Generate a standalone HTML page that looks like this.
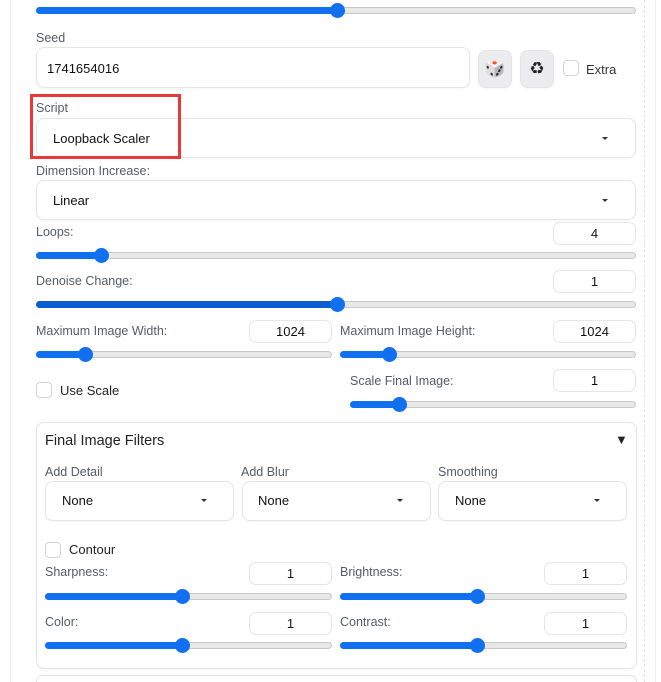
<!DOCTYPE html>
<html style="width:661px;height:682px;overflow:hidden"><head><style>
*{box-sizing:border-box;margin:0;padding:0}
body{width:661px;height:682px;background:#fff;font-family:"Liberation Sans",sans-serif;position:relative;overflow:hidden}
.a{position:absolute}
.lbl{position:absolute;font-size:12.5px;color:#555c66;line-height:14px;margin-top:2px}
.box{position:absolute;border:1px solid #e3e5e8;border-radius:8px;background:#fff;box-shadow:0 1px 2px rgba(0,0,0,.04)}
.num{position:absolute;border:1px solid #e3e5e8;border-radius:7px;background:#fff;font-size:13px;color:#111;text-align:center;line-height:21px;height:23px}
.tr{position:absolute;height:7px;border:1px solid #c9c9c9;border-radius:4px;background:#e8e8e8}
.fill{position:absolute;left:-1px;top:-1px;height:7px;border-radius:4px;background:#1170f0}
.th{position:absolute;top:-5px;width:15px;height:15px;border-radius:50%;background:#1170f0;margin-left:-7px}
.txt{position:absolute;font-size:13px;color:#111}
.arr{position:absolute;width:0;height:0;border-left:3.5px solid transparent;border-right:3.5px solid transparent;border-top:3.5px solid #333}
.cb{position:absolute;width:16px;height:16px;border:1px solid #cfd2d6;border-radius:4px;background:#fff}
</style></head><body>
<div class="a" style="left:10px;top:0;width:1px;height:682px;background:#ececec"></div>
<div class="a" style="left:644px;top:0;width:0;height:682px;border-left:1px dashed #e2e2e2"></div>
<div class="a" style="left:655px;top:0;width:1px;height:682px;background:#efefef"></div>

<div class="tr" style="left:36px;top:7px;width:600px"><div class="fill" style="width:301px"></div><div class="th" style="left:300px"></div></div>

<div class="lbl" style="left:36px;top:29px">Seed</div>
<div class="box" style="left:36px;top:47px;width:434px;height:41px"></div>
<div class="txt" style="left:47px;top:61px">1741654016</div>
<div class="box" style="left:478px;top:50px;width:34px;height:38px;background:#ececee;border-color:#e4e4e6;display:flex;align-items:center;justify-content:center;font-size:17px">🎲</div>
<div class="box" style="left:520px;top:50px;width:34px;height:38px;background:#ececee;border-color:#e4e4e6;display:flex;align-items:center;justify-content:center;font-size:17px;color:#222">♻</div>
<div class="cb" style="left:563px;top:60px"></div>
<div class="txt" style="left:586px;top:62px;color:#333">Extra</div>

<div class="lbl" style="left:36px;top:99px">Script</div>
<div class="box" style="left:36px;top:118px;width:600px;height:40px"></div>
<div class="txt" style="left:53px;top:131px">Loopback Scaler</div>
<div class="arr" style="left:602px;top:137px"></div>
<div class="a" style="left:30px;top:94px;width:151px;height:65px;border:3px solid #e8383a"></div>

<div class="lbl" style="left:36px;top:162px">Dimension Increase:</div>
<div class="box" style="left:36px;top:180px;width:600px;height:40px"></div>
<div class="txt" style="left:53px;top:193px">Linear</div>
<div class="arr" style="left:602px;top:199px"></div>

<div class="lbl" style="left:36px;top:223px">Loops:</div>
<div class="num" style="left:553px;top:222px;width:83px">4</div>
<div class="tr" style="left:36px;top:252px;width:600px"><div class="fill" style="width:65px"></div><div class="th" style="left:64px"></div></div>

<div class="lbl" style="left:36px;top:272px">Denoise Change:</div>
<div class="num" style="left:553px;top:270px;width:83px">1</div>
<div class="tr" style="left:36px;top:301px;width:600px"><div class="fill" style="width:301px;background:#0a5fd0"></div><div class="th" style="left:300px"></div></div>

<div class="lbl" style="left:36px;top:322px">Maximum Image Width:</div>
<div class="num" style="left:249px;top:320px;width:83px">1024</div>
<div class="tr" style="left:36px;top:351px;width:296px"><div class="fill" style="width:49px"></div><div class="th" style="left:48px"></div></div>
<div class="lbl" style="left:340px;top:322px">Maximum Image Height:</div>
<div class="num" style="left:553px;top:320px;width:83px">1024</div>
<div class="tr" style="left:340px;top:351px;width:296px"><div class="fill" style="width:49px"></div><div class="th" style="left:48px"></div></div>

<div class="cb" style="left:36px;top:382px"></div>
<div class="txt" style="left:60px;top:383px;color:#222">Use Scale</div>
<div class="lbl" style="left:350px;top:372px">Scale Final Image:</div>
<div class="num" style="left:553px;top:369px;width:83px">1</div>
<div class="tr" style="left:350px;top:401px;width:286px"><div class="fill" style="width:49px"></div><div class="th" style="left:48px"></div></div>

<div class="box" style="left:36px;top:422px;width:601px;height:247px"></div>
<div class="a" style="left:45px;top:433px;font-size:14.5px;color:#222">Final Image Filters</div>
<div class="a" style="left:615px;top:432px;font-size:13px;color:#222">▼</div>

<div class="lbl" style="left:45px;top:463px">Add Detail</div>
<div class="lbl" style="left:241px;top:463px">Add Blur</div>
<div class="lbl" style="left:438px;top:463px">Smoothing</div>
<div class="box" style="left:45px;top:481px;width:189px;height:40px"></div>
<div class="box" style="left:242px;top:481px;width:189px;height:40px"></div>
<div class="box" style="left:438px;top:481px;width:189px;height:40px"></div>
<div class="txt" style="left:62px;top:493px">None</div>
<div class="txt" style="left:258px;top:493px">None</div>
<div class="txt" style="left:455px;top:493px">None</div>
<div class="arr" style="left:201px;top:499px"></div>
<div class="arr" style="left:397px;top:499px"></div>
<div class="arr" style="left:594px;top:499px"></div>

<div class="cb" style="left:45px;top:542px"></div>
<div class="txt" style="left:69px;top:542px;color:#222">Contour</div>

<div class="lbl" style="left:45px;top:563px">Sharpness:</div>
<div class="num" style="left:249px;top:562px;width:83px">1</div>
<div class="tr" style="left:45px;top:593px;width:287px"><div class="fill" style="width:137px"></div><div class="th" style="left:136px"></div></div>
<div class="lbl" style="left:340px;top:563px">Brightness:</div>
<div class="num" style="left:544px;top:562px;width:83px">1</div>
<div class="tr" style="left:340px;top:593px;width:287px"><div class="fill" style="width:137px"></div><div class="th" style="left:136px"></div></div>

<div class="lbl" style="left:45px;top:613px">Color:</div>
<div class="num" style="left:249px;top:612px;width:83px">1</div>
<div class="tr" style="left:45px;top:642px;width:287px"><div class="fill" style="width:137px"></div><div class="th" style="left:136px"></div></div>
<div class="lbl" style="left:340px;top:613px">Contrast:</div>
<div class="num" style="left:544px;top:612px;width:83px">1</div>
<div class="tr" style="left:340px;top:642px;width:287px"><div class="fill" style="width:137px"></div><div class="th" style="left:136px"></div></div>

<div class="box" style="left:36px;top:675px;width:601px;height:7px;border-bottom:none;border-radius:8px 8px 0 0"></div>
</body></html>
